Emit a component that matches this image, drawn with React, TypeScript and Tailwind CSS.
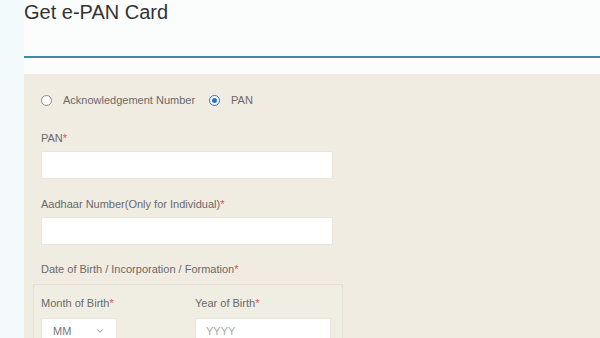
import { ChevronDown } from "lucide-react";

function Req() {
  return <span className="text-[#d9534f]">*</span>;
}

function Radio({ checked, label }: { checked?: boolean; label: string }) {
  return (
    <label className="flex items-center gap-[11px]">
      <span
        className={
          checked
            ? "flex h-[11px] w-[11px] items-center justify-center rounded-full border border-[#2f6fcb] bg-white"
            : "h-[11px] w-[11px] rounded-full border border-[#8a8a8a] bg-white"
        }
      >
        {checked && <span className="h-[5px] w-[5px] rounded-full bg-[#2f6fcb]" />}
      </span>
      <span>{label}</span>
    </label>
  );
}

function TextField({ label, star = true }: { label: string; star?: boolean }) {
  return (
    <div className="flex flex-col">
      <div className="h-[13px] leading-[13px]">
        {label}
        {star && <Req />}
      </div>
      <div className="mt-[6px] h-[28px] w-[292px] rounded-[2px] border border-[#ebe6db] bg-white" />
    </div>
  );
}

export default function App() {
  return (
    <div
      className="flex h-[338px] w-[600px] overflow-hidden bg-white text-[11px] text-[#6a6a6a]"
      style={{ fontFamily: '"Liberation Sans", Arial, sans-serif' }}
    >
      <div className="w-[24px] shrink-0 bg-[#f3fafb]" />
      <div className="flex min-h-0 flex-1 flex-col bg-[#fbfdfd]">
        {/* Header */}
        <h1 className="mt-[1px] h-[22px] shrink-0 text-[20px] leading-[22px] text-[#333]">Get e-PAN Card</h1>
        <div className="mt-[33px] h-[2px] shrink-0 bg-[#3f8d9f]" />

        {/* Form panel */}
        <div className="mt-[16px] shrink-0 grow bg-[#f1ece2] pl-[17px] pt-[20px]">
          <div className="flex h-[12px] items-center gap-[14px]">
            <Radio label="Acknowledgement Number" />
            <Radio checked label="PAN" />
          </div>

          <div className="mt-[26px] flex flex-col gap-[19px]">
            <TextField label="PAN" />
            <TextField label="Aadhaar Number(Only for Individual)" />
          </div>

          <div className="mt-[18px] h-[13px] leading-[13px]">
            Date of Birth / Incorporation / Formation
            <Req />
          </div>

          <div className="-ml-[8px] mt-[8px] w-[310px] border border-[#e6e1d5] bg-[#f0ede3] px-[7px] pt-[12px] pb-[10px]">
            <div className="flex">
              <div className="flex w-[154px] flex-col">
                <div className="h-[13px] leading-[13px]">
                  Month of Birth
                  <Req />
                </div>
                <div className="mt-[8px] flex h-[26px] w-[76px] items-center justify-between rounded-[2px] border border-[#ebe6db] bg-white pl-[11px] pr-[11px] text-[#777]">
                  <span>MM</span>
                  <ChevronDown className="h-[10px] w-[10px]" strokeWidth={2} />
                </div>
              </div>
              <div className="flex flex-col">
                <div className="h-[13px] leading-[13px]">
                  Year of Birth
                  <Req />
                </div>
                <div className="mt-[8px] flex h-[26px] w-[136px] items-center rounded-[2px] border border-[#ebe6db] bg-white pl-[10px] text-[#aaa]">
                  YYYY
                </div>
              </div>
            </div>
          </div>
        </div>
      </div>
    </div>
  );
}
